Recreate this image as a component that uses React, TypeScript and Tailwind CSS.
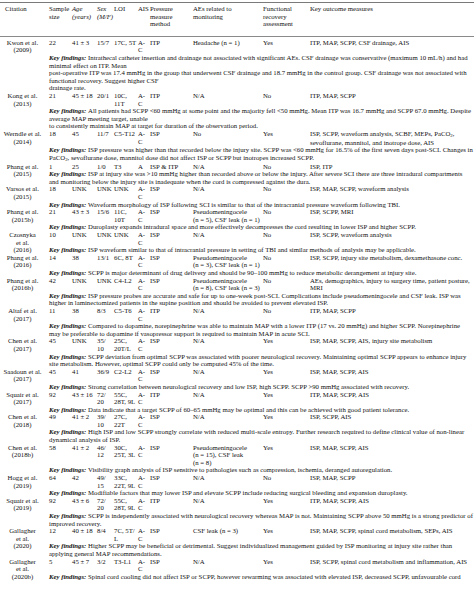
import React from "react";

type Cell = React.ReactNode[];

interface Row {
  cite: string[];
  cells: Cell[]; // sample, age, sex, loi, ais, method, aes, functional, outcomes
  findings: React.ReactNode[];
}

const AC = ["A-", "C"];
const Sub2 = () => <span className="text-[4.8px] leading-none align-[-1px]">2</span>;

const rows: Row[] = [
  {
    cite: ["Kwon et al.", "(2009)"],
    cells: [["22"], ["41 ± 3"], ["15/7"], ["17C, 5T"], AC, ["ITP"], ["Headache (n = 1)"], ["Yes"], ["ITP, MAP, SCPP, CSF drainage, AIS"]],
    findings: [
      "Intrathecal catheter insertion and drainage not associated with significant AEs. CSF drainage was conservative (maximum 10 mL/h) and had",
      "minimal effect on ITP. Mean",
      "post-operative ITP was 17.4 mmHg in the group that underwent CSF drainage and 18.7 mmHg in the control group. CSF drainage was not associated with",
      "functional recovery. Suggest higher CSF",
      "drainage rate.",
    ],
  },
  {
    cite: ["Kong et al.", "(2013)"],
    cells: [["21"], ["45 ± 18"], ["20/1"], ["10C,", "11T"], AC, ["ITP"], ["N/A"], ["No"], ["ITP, MAP, SCPP"]],
    findings: [
      "All patients had SCPP <60 mmHg at some point and the majority fell <50 mmHg. Mean ITP was 16.7 mmHg and SCPP 67.0 mmHg. Despite",
      "average MAP meeting target, unable",
      "to consistently maintain MAP at target for duration of the observation period.",
    ],
  },
  {
    cite: ["Werndle et al.", "(2014)"],
    cells: [
      ["18"], ["45"], ["11/7"], ["C5-T12"], AC, ["ISP"], ["No"], ["Yes"],
      [<>ISP, SCPP, waveform analysis, SCBF, MEPs, PaCO<Sub2 />,</>, "sevoflurane, mannitol, and inotrope dose, AIS"],
    ],
    findings: [
      "ISP pressure was higher than that recorded below the injury site. SCPP was <60 mmHg for 16.5% of the first seven days post-SCI. Changes in",
      <>PaCO<Sub2 />, sevoflurane dose, mannitol dose did not affect ISP or SCPP but inotropes increased SCPP.</>,
    ],
  },
  {
    cite: ["Phang et al.", "(2015)"],
    cells: [["1"], ["25"], ["1/0"], ["T3"], ["A"], ["ISP & ITP"], ["N/A"], ["No"], ["ISP, ITP"]],
    findings: [
      "ISP at injury site was >10 mmHg higher than recorded above or below the injury. After severe SCI there are three intradural compartments",
      "and monitoring below the injury site is inadequate when the cord is compressed against the dura.",
    ],
  },
  {
    cite: ["Varsos et al.", "(2015)"],
    cells: [["18"], ["UNK"], ["UNK"], ["UNK"], AC, ["ISP"], ["N/A"], ["No"], ["ISP, MAP, SCPP, waveform analysis"]],
    findings: ["Waveform morphology of ISP following SCI is similar to that of the intracranial pressure waveform following TBI."],
  },
  {
    cite: ["Phang et al.", "(2015b)"],
    cells: [["21"], ["43 ± 3"], ["15/6"], ["11C,", "10T"], AC, ["ISP"], ["Pseudomeningocele", "(n = 5), CSF leak (n = 1)"], ["No"], ["ISP, SCPP, MRI"]],
    findings: ["Duroplasty expands intradural space and more effectively decompresses the cord resulting in lower ISP and higher SCPP."],
  },
  {
    cite: ["Czosnyka", "et al.", "(2016)"],
    cells: [["10"], ["UNK"], ["UNK"], ["UNK"], AC, ["ISP"], ["N/A"], ["No"], ["ISP, SCPP, waveform analysis"]],
    findings: ["ISP waveform similar to that of intracranial pressure in setting of TBI and similar methods of analysis may be applicable."],
  },
  {
    cite: ["Phang et al.", "(2016)"],
    cells: [["14"], ["38"], ["13/1"], ["6C, 8T"], AC, ["ISP"], ["Pseudomeningocele", "(n = 3), CSF leak (n = 1)"], ["No"], ["ISP, SCPP, injury site metabolism, dexamethasone conc."]],
    findings: ["SCPP is major determinant of drug delivery and should be 90–100 mmHg to reduce metabolic derangement at injury site."],
  },
  {
    cite: ["Phang et al.", "(2016b)"],
    cells: [
      ["42"], ["UNK"], ["UNK"], ["C4-L2"], AC, ["ISP"], ["Pseudomeningocele", "(n = 8), CSF leak (n = 3)"], ["No"],
      ["AEs, demographics, injury to surgery time, patient posture,", "MRI"],
    ],
    findings: [
      "ISP pressure probes are accurate and safe for up to one-week post-SCI. Complications include pseudomeningocele and CSF leak. ISP was",
      "higher in laminectomized patients in the supine position and should be avoided to prevent elevated ISP.",
    ],
  },
  {
    cite: ["Altaf et al.", "(2017)"],
    cells: [["11"], ["38"], ["8/3"], ["C5-T6"], AC, ["ITP"], ["N/A"], ["No"], ["ITP, MAP, SCPP"]],
    findings: [
      "Compared to dopamine, norepinephrine was able to maintain MAP with a lower ITP (17 vs. 20 mmHg) and higher SCPP. Norepinephrine",
      "may be preferable to dopamine if vasopressor support is required to maintain MAP in acute SCI.",
    ],
  },
  {
    cite: ["Chen et al.", "(2017)"],
    cells: [["45"], ["UNK"], ["35/", "10"], ["25C,", "20T/L"], AC, ["ISP"], ["N/A"], ["Yes"], ["ISP, MAP, SCPP, AIS, injury site metabolism"]],
    findings: [
      "SCPP deviation from optimal SCPP was associated with poorer neurological recovery. Maintaining optimal SCPP appears to enhance injury",
      "site metabolism. However, optimal SCPP could only be computed 45% of the time.",
    ],
  },
  {
    cite: ["Saadoun et al.", "(2017)"],
    cells: [["45"], ["41"], ["36/9"], ["C2-L2"], AC, ["ISP"], ["N/A"], ["Yes"], ["ISP, MAP, SCPP, AIS"]],
    findings: ["Strong correlation between neurological recovery and low ISP, high SCPP. SCPP >90 mmHg associated with recovery."],
  },
  {
    cite: ["Squair et al.", "(2017)"],
    cells: [["92"], ["43 ± 16"], ["72/", "20"], ["55C,", "28T, 9L"], AC, ["ITP"], ["N/A"], ["Yes"], ["ITP, MAP, SCPP, AIS"]],
    findings: ["Data indicate that a target SCPP of 60–65 mmHg may be optimal and this can be achieved with good patient tolerance."],
  },
  {
    cite: ["Chen et al.", "(2018)"],
    cells: [["49"], ["41 ± 2"], ["39/", "10"], ["27C,", "22T"], AC, ["ISP"], ["N/A"], ["Yes"], ["ISP, SCPP, AIS"]],
    findings: [
      "High ISP and low SCPP strongly correlate with reduced multi-scale entropy. Further research required to define clinical value of non-linear",
      "dynamical analysis of ISP.",
    ],
  },
  {
    cite: ["Chen et al.", "(2018b)"],
    cells: [["58"], ["41 ± 2"], ["46/", "12"], ["30C,", "25T, 3L"], AC, ["ISP"], ["Pseudomeningocele", "(n = 15), CSF leak", "(n = 8)"], ["Yes"], ["ISP, MAP, SCPP, AIS"]],
    findings: ["Visibility graph analysis of ISP sensitive to pathologies such as compression, ischemia, deranged autoregulation."],
  },
  {
    cite: ["Hogg et al.", "(2019)"],
    cells: [["64"], ["42"], ["49/", "15"], ["33C,", "22T, 9L"], AC, ["ISP"], ["N/A"], ["No"], ["ISP, MAP, SCPP"]],
    findings: ["Modifiable factors that may lower ISP and elevate SCPP include reducing surgical bleeding and expansion duroplasty."],
  },
  {
    cite: ["Squair et al.", "(2019)"],
    cells: [["92"], ["43 ± 6"], ["72/", "20"], ["55C,", "28T, 9L"], AC, ["ITP"], ["N/A"], ["Yes"], ["ITP, MAP, SCPP, AIS"]],
    findings: [
      "SCPP is independently associated with neurological recovery whereas MAP is not. Maintaining SCPP above 50 mmHg is a strong predictor of",
      "improved recovery.",
    ],
  },
  {
    cite: ["Gallagher", "et al.", "(2020)"],
    cells: [["12"], ["40 ± 18"], ["8/4"], ["7C, 5T/", "L"], AC, ["ISP"], ["CSF leak (n = 3)"], ["Yes"], ["ISP, MAP, SCPP, spinal cord metabolism, SEPs, AIS"]],
    findings: [
      "Higher SCPP may be beneficial or detrimental. Suggest individualized management guided by ISP monitoring at injury site rather than",
      "applying general MAP recommendations.",
    ],
  },
  {
    cite: ["Gallagher", "et al.", "(2020b)"],
    cells: [["5"], ["45 ± 7"], ["3/2"], ["T3-L1"], AC, ["ISP"], ["N/A"], ["Yes"], ["ISP, SCPP, spinal cord metabolism and inflammation, AIS"]],
    findings: ["Spinal cord cooling did not affect ISP or SCPP, however rewarming was associated with elevated ISP, decreased SCPP, unfavourable cord"],
  },
];

const cols = "grid grid-cols-[23px_25px_17px_24px_12px_43px_70px_47px_1fr]";

function Lines({ lines }: { lines: React.ReactNode[] }) {
  return (
    <div>
      {lines.map((l, i) => (
        <div key={i} className="whitespace-nowrap">
          {l}
        </div>
      ))}
    </div>
  );
}

function TableRow({ row }: { row: Row }) {
  return (
    <div className="flex">
      <div className="w-[45px] shrink-0 flex flex-col items-center">
        {row.cite.map((c) => (
          <div key={c} className="whitespace-nowrap">
            {c}
          </div>
        ))}
      </div>
      <div className="ml-[4px] flex-1 min-w-0">
        <div className={cols}>
          {row.cells.map((c, i) => (
            <Lines key={i} lines={c} />
          ))}
        </div>
        {row.findings.map((f, i) => (
          <div key={i} className="whitespace-nowrap">
            {i === 0 && <span className="font-bold italic">Key findings: </span>}
            {f}
          </div>
        ))}
      </div>
    </div>
  );
}

export default function App() {
  return (
    <div className="w-[474px] h-[590px] overflow-hidden bg-white text-[#111] font-['Liberation_Serif',serif] text-[6.75px] leading-[7.59px]">
      <div className="mt-[2px] border-t-[1.5px] border-[#7a7a7a]" />
      <div className="flex pt-[2px] pb-[8px] border-b border-[#8a8a8a]">
        <div className="w-[45px] shrink-0 pl-[5px]">Citation</div>
        <div className={`ml-[4px] flex-1 ${cols}`}>
          <Lines lines={["Sample", "size"]} />
          <div className="italic">
            <Lines lines={["Age", "(years)"]} />
          </div>
          <div className="italic">
            <Lines lines={["Sex", "(M/F)"]} />
          </div>
          <Lines lines={["LOI"]} />
          <Lines lines={["AIS"]} />
          <Lines lines={["Pressure", "measure", "method"]} />
          <Lines lines={["AEs related to", "monitoring"]} />
          <Lines lines={["Functional", "recovery", "assessment"]} />
          <Lines lines={["Key outcome measures"]} />
        </div>
      </div>
      <div className="pt-[2px]">
        {rows.map((r, i) => (
          <TableRow key={i} row={r} />
        ))}
      </div>
    </div>
  );
}
